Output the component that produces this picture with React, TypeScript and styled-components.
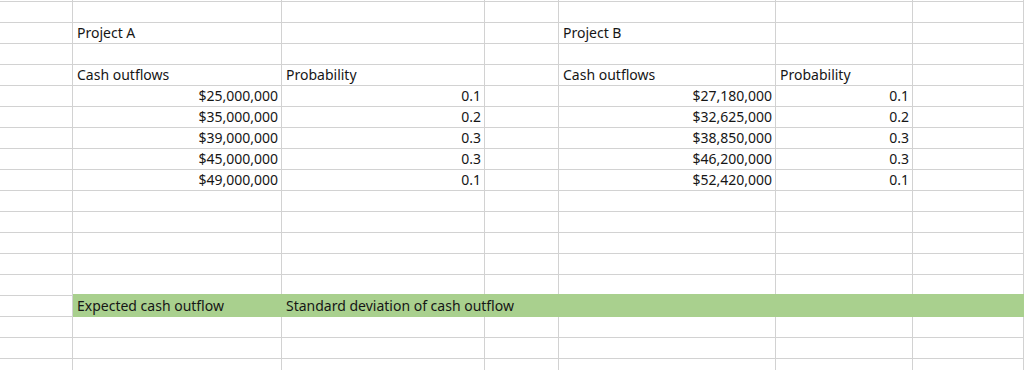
import React from "react";
import styled, { createGlobalStyle } from "styled-components";

const Global = createGlobalStyle`
  html, body { margin: 0; padding: 0; background: #ffffff; overflow: hidden; }
  body { font-family: "Noto Sans", "Liberation Sans", Arial, sans-serif; }
`;

const Sheet = styled.div`
  display: grid;
  grid-template-columns: 73px 209px 203px 74px 217px 137px 1fr;
  width: 1024px;
  height: 370px;
  overflow: hidden;
  grid-auto-rows: 21px;
  grid-template-rows: 2px;
`;

const Cell = styled.div<{ $align?: "left" | "right"; $green?: boolean; $noRight?: boolean; $span?: number }>`
  box-sizing: border-box;
  border-right: 1px solid ${(p) => (p.$noRight ? "transparent" : "#d2d2d2")};
  border-bottom: 1px solid ${(p) => (p.$green ? "#a9d08e" : "#d2d2d2")};
  background: ${(p) => (p.$green ? "#a9d08e" : "transparent")};
  box-shadow: ${(p) => (p.$green ? "0 -2px 0 #a9d08e" : "none")};
  grid-column: ${(p) => (p.$span ? `span ${p.$span}` : "auto")};
  padding: 0 3px 0 4px;
  font-size: 14px;
  line-height: 20px;
  color: #161616;
  white-space: nowrap;
  overflow: visible;
  text-align: ${(p) => (p.$align === "right" ? "right" : "left")};
  ${(p) => (p.$green ? "position: relative; z-index: 1;" : "")}
`;

const TopCell = styled.div`
  box-sizing: border-box;
  border-right: 1px solid #d2d2d2;
  border-bottom: 1px solid #d2d2d2;
`;

type C = { t?: string; r?: boolean };
const e: C = {};

const data = [
  ["$25,000,000", "0.1", "$27,180,000", "0.1"],
  ["$35,000,000", "0.2", "$32,625,000", "0.2"],
  ["$39,000,000", "0.3", "$38,850,000", "0.3"],
  ["$45,000,000", "0.3", "$46,200,000", "0.3"],
  ["$49,000,000", "0.1", "$52,420,000", "0.1"],
];

const blank: C[] = [e, e, e, e, e, e, e];

const rows: C[][] = [
  blank,
  [e, { t: "Project A" }, e, e, { t: "Project B" }, e, e],
  blank,
  [e, { t: "Cash outflows" }, { t: "Probability" }, e, { t: "Cash outflows" }, { t: "Probability" }, e],
  ...data.map((d) => [e, { t: d[0], r: true }, { t: d[1], r: true }, e, { t: d[2], r: true }, { t: d[3], r: true }, e]),
  blank,
  blank,
  blank,
  blank,
  blank,
];

const afterRows = 3;

export default function App() {
  return (
    <>
      <Global />
      <Sheet>
        {Array.from({ length: 7 }).map((_, i) => (
          <TopCell key={`top${i}`} />
        ))}
        {rows.map((row, ri) =>
          row.map((c, ci) => (
            <Cell key={`${ri}-${ci}`} $align={c.r ? "right" : "left"}>
              {c.t}
            </Cell>
          ))
        )}
        <Cell />
        <Cell $green $noRight>
          Expected cash outflow
        </Cell>
        <Cell $green $noRight $span={5}>
          Standard deviation of cash outflow
        </Cell>
        {Array.from({ length: afterRows }).map((_, ri) =>
          Array.from({ length: 7 }).map((_, ci) => <Cell key={`a${ri}-${ci}`} />)
        )}
      </Sheet>
    </>
  );
}
